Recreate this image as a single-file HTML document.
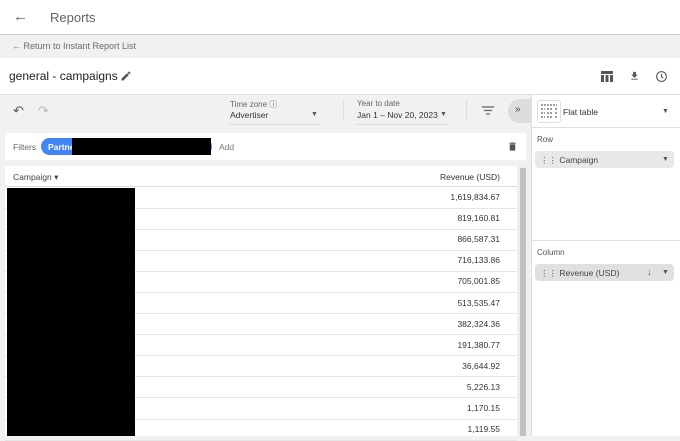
<!DOCTYPE html>
<html><head><style>
*{margin:0;padding:0;box-sizing:border-box}
body{width:680px;height:436px;overflow:hidden;background:#f1f1f1;font-family:"Liberation Sans",sans-serif;position:relative;color:#3c4043}
.a{position:absolute}
</style></head><body>
<div class="a" style="left:0;top:0;width:680px;height:35px;background:#fff;border-bottom:1px solid #ccc"></div>
<div class="a" style="left:13px;top:8px;font-size:15px;color:#5f6368">&#8592;</div>
<div class="a" style="left:50px;top:10px;font-size:13px;color:#5f6368">Reports</div>
<div class="a" style="left:12px;top:41px;font-size:9px;color:#6b6b6b">&#8592; Return to Instant Report List</div>
<div class="a" style="left:0;top:58px;width:680px;height:37px;background:#fff;border-bottom:1px solid #e0e0e0"></div>
<div class="a" style="left:9px;top:69px;font-size:12px;color:#222">general - campaigns</div>
<svg class="a" style="left:120px;top:70px" width="12" height="12" viewBox="0 0 24 24"><path d="M3 17.25V21h3.75L17.8 9.94l-3.75-3.75L3 17.25zM20.7 7.04a1 1 0 000-1.41l-2.34-2.34a1 1 0 00-1.41 0l-1.83 1.83 3.75 3.75 1.83-1.83z" fill="#555"/></svg>
<svg class="a" style="left:601px;top:71px" width="12" height="11" viewBox="0 0 12 11"><rect x="0" y="0" width="12" height="3" fill="#555"/><rect x="0" y="4" width="3" height="7" fill="#555"/><rect x="4.5" y="4" width="3" height="7" fill="#555"/><rect x="9" y="4" width="3" height="7" fill="#555"/></svg>
<svg class="a" style="left:629px;top:70px" width="11" height="12" viewBox="0 0 24 24"><path d="M19 9h-4V3H9v6H5l7 7 7-7zM5 18v2h14v-2H5z" fill="#555"/></svg>
<svg class="a" style="left:655px;top:70px" width="13" height="13" viewBox="0 0 24 24"><circle cx="12" cy="12" r="9" fill="none" stroke="#555" stroke-width="2"/><path d="M12 7v5l3 3" fill="none" stroke="#555" stroke-width="2"/></svg>
<div class="a" style="left:13px;top:103px;font-size:13px;color:#555">&#8630;</div>
<div class="a" style="left:38px;top:103px;font-size:13px;color:#bbb">&#8631;</div>
<div class="a" style="left:230px;top:99px;font-size:8px;color:#666">Time zone &#9432;</div>
<div class="a" style="left:230px;top:110px;font-size:8.5px;color:#333">Advertiser</div>
<div class="a" style="left:311px;top:111px;font-size:7px;color:#555">&#9660;</div>
<div class="a" style="left:229px;top:124px;width:92px;height:1px;background:#ddd"></div>
<div class="a" style="left:343px;top:99px;width:1px;height:22px;background:#ddd"></div>
<div class="a" style="left:357px;top:99px;font-size:8px;color:#666">Year to date</div>
<div class="a" style="left:357px;top:110px;font-size:8.5px;color:#333">Jan 1 – Nov 20, 2023</div>
<div class="a" style="left:440px;top:111px;font-size:7px;color:#555">&#9660;</div>
<div class="a" style="left:356px;top:124px;width:93px;height:1px;background:#ddd"></div>
<div class="a" style="left:466px;top:99px;width:1px;height:22px;background:#ddd"></div>
<svg class="a" style="left:482px;top:106px" width="12" height="9"><path d="M0 1h12M2 4.5h8M4 8h4" stroke="#666" stroke-width="1.3"/></svg>
<div class="a" style="left:508px;top:99px;width:26px;height:24px;border-radius:12px 0 0 12px;background:#ddd;font-size:10px;color:#444;padding:5px 0 0 7px">&#187;</div>
<div class="a" style="left:5px;top:133px;width:521px;height:27px;background:#fff"></div>
<div class="a" style="left:13px;top:142px;font-size:8.5px;color:#666">Filters</div>
<div class="a" style="left:41px;top:138px;width:171px;height:17px;border-radius:9px;background:#4285f4"></div>
<div class="a" style="left:48px;top:142px;font-size:8.5px;color:#fff;font-weight:bold">Partner</div>
<div class="a" style="left:72px;top:138px;width:139px;height:17px;background:#000"></div>
<div class="a" style="left:219px;top:142px;font-size:8.5px;color:#777">Add</div>
<svg class="a" style="left:507px;top:140px" width="11" height="13" viewBox="0 0 24 24"><path d="M6 19a2 2 0 002 2h8a2 2 0 002-2V7H6v12zM19 4h-3.5l-1-1h-5l-1 1H5v2h14V4z" fill="#555"/></svg>
<div class="a" style="left:5px;top:166px;width:524px;height:270px;background:#fff"></div>
<div class="a" style="left:13px;top:172px;font-size:8.5px;color:#444">Campaign &#9662;</div>
<div class="a" style="left:380px;top:172px;width:120px;text-align:right;font-size:8.5px;color:#333">Revenue (USD)</div>
<div class="a" style="left:5px;top:186px;width:512px;height:1px;background:#ddd"></div>
<div class="a" style="left:517px;top:166px;width:12px;height:270px;background:#eee"></div>
<div class="a" style="left:520px;top:168px;width:6px;height:268px;background:#c1c1c1"></div>
<div id="rows"></div>
<div class="a" style="left:7px;top:188px;width:128px;height:248px;background:#000"></div>
<div class="a" style="left:531px;top:95px;width:149px;height:341px;background:#fff;border-left:1px solid #ddd"></div>
<div class="a" style="left:537px;top:100px;width:24px;height:23px;border:1px solid #ddd;border-radius:3px"></div>
<svg class="a" style="left:540px;top:104px" width="18" height="15"><path d="M1 1h16M1 5h4M7 5h6M15 5h2M1 9h4M7 9h6M15 9h2M1 13h4M7 13h6M15 13h2" stroke="#666" stroke-width="1.3" stroke-dasharray="2 1"/></svg>
<div class="a" style="left:563px;top:107px;font-size:8.5px;color:#333">Flat table</div>
<div class="a" style="left:662px;top:108px;font-size:7px;color:#555">&#9660;</div>
<div class="a" style="left:532px;top:127px;width:148px;height:1px;background:#e0e0e0"></div>
<div class="a" style="left:537px;top:135px;font-size:8px;color:#555">Row</div>
<div class="a" style="left:535px;top:151px;width:139px;height:17px;background:#e8e8e8;border-radius:4px"></div>
<div class="a" style="left:540px;top:155px;font-size:8.5px;color:#444">&#8942;&#8942; Campaign</div>
<div class="a" style="left:662px;top:156px;font-size:7px;color:#555">&#9660;</div>
<div class="a" style="left:532px;top:240px;width:148px;height:1px;background:#e0e0e0"></div>
<div class="a" style="left:537px;top:248px;font-size:8px;color:#555">Column</div>
<div class="a" style="left:535px;top:264px;width:139px;height:17px;background:#e0e0e0;border-radius:4px"></div>
<div class="a" style="left:540px;top:268px;font-size:8.5px;color:#444">&#8942;&#8942; Revenue (USD)</div>
<div class="a" style="left:647px;top:267px;font-size:9px;color:#555">&#8595;</div>
<div class="a" style="left:662px;top:269px;font-size:7px;color:#555">&#9660;</div>
<script>
var v=["1,619,834.67","819,160.81","866,587.31","716,133.86","705,001.85","513,535.47","382,324.36","191,380.77","36,644.92","5,226.13","1,170.15","1,119.55"],h="";
for(var i=0;i<v.length;i++){var t=187+i*21.1;h+='<div class="a" style="left:380px;top:'+(t+5)+'px;width:120px;text-align:right;font-size:8.5px;color:#333">'+v[i]+'</div><div class="a" style="left:5px;top:'+(t+20.5)+'px;width:512px;height:1px;background:#e4e4e4"></div>';}
document.getElementById("rows").outerHTML=h;
</script>
</body></html>
